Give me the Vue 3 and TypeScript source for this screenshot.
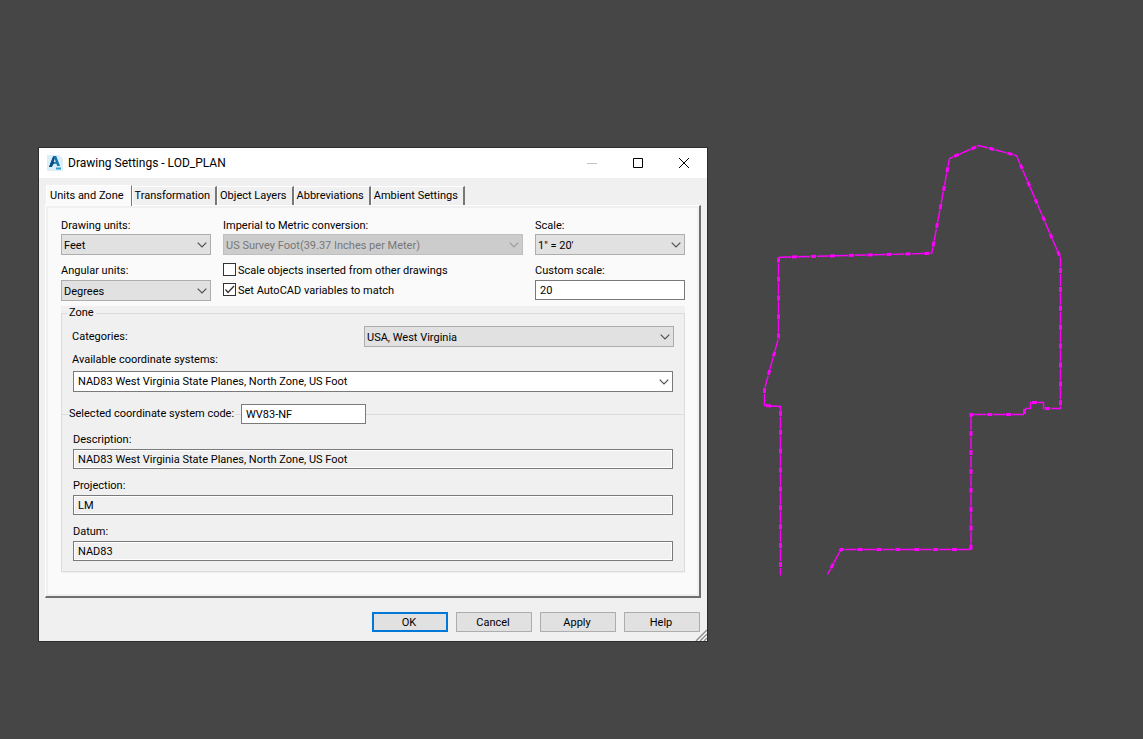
<script setup lang="ts">
import { ref } from 'vue'

interface Field {
  id: string
  label: string
  value: string
}

const tabs = ['Units and Zone', 'Transformation', 'Object Layers', 'Abbreviations', 'Ambient Settings']
const activeTab = ref(0)

const drawingUnits = ref('Feet')
const angularUnits = ref('Degrees')
const conversion = ref('US Survey Foot(39.37 Inches per Meter)')
const scale = ref('1" = 20\'')
const customScale = ref('20')
const scaleObjects = ref(false)
const matchVariables = ref(true)
const category = ref('USA, West Virginia')
const system = ref('NAD83 West Virginia State Planes, North Zone, US Foot')
const code = ref('WV83-NF')

const details: Field[] = [
  { id: 'description', label: 'Description:', value: 'NAD83 West Virginia State Planes, North Zone, US Foot' },
  { id: 'projection', label: 'Projection:', value: 'LM' },
  { id: 'datum', label: 'Datum:', value: 'NAD83' },
]

const actions = ['OK', 'Cancel', 'Apply', 'Help']

// Boundary runs; `lead` is the distance to the first heavy mark of the linetype.
const runs = [
  { d: 'M780.5 575.5V406.5L764.5 405.5V389L778.5 338V257.3L931.8 253.3', lead: 8.5 },
  { d: 'M931.8 253.3L949.5 158.5L979 145.5L1016.5 155.5L1060.5 258', lead: 7 },
  { d: 'M1060.5 258V408.5H1043.5V402.5H1030.5V408.5H1024.5V414.5H971V549.5H841L827.5 574.5', lead: 10 },
]
</script>

<template>
  <main class="workspace">
    <section class="dialog" role="dialog" aria-labelledby="dialog-title">
      <header class="titlebar">
        <svg class="logo" viewBox="0 0 16 16" aria-hidden="true">
          <path d="M0 0H12L16 4V16H0Z" fill="#dceef8" />
          <path d="M2 12L6.300 1H9.200L13 11H10.200L9.400 8.800H6L4.800 12Z" fill="#1674ae" />
          <path d="M6.300 1L8 6.500L4.800 12H2Z" fill="#0b4f80" />
          <path d="M6.700 7H8.800L7.700 3.800Z" fill="#dceef8" />
          <path d="M9 13.500H14" stroke="#2f9bd0" stroke-width="2" />
        </svg>
        <h1 id="dialog-title">Drawing Settings - LOD_PLAN</h1>
        <div class="window-buttons">
          <button type="button" aria-label="Minimize" disabled>
            <svg viewBox="0 0 12 12"><path d="M1 6.500H11" stroke="#c4c4c4" /></svg>
          </button>
          <button type="button" aria-label="Maximize">
            <svg viewBox="0 0 12 12"><path d="M1.500 1.500H10.500V10.500H1.500Z" fill="none" stroke="#000" /></svg>
          </button>
          <button type="button" aria-label="Close">
            <svg viewBox="0 0 12 12"><path d="M1 1L11 11M11 1L1 11" stroke="#000" /></svg>
          </button>
        </div>
      </header>

      <div class="body">
        <div class="tabs" role="tablist">
          <button
            v-for="(tab, i) in tabs"
            :key="tab"
            type="button"
            role="tab"
            class="tab"
            :class="{ active: i === activeTab }"
            :aria-selected="i === activeTab"
            @click="activeTab = i"
          >{{ tab }}</button>
        </div>

        <div class="panel" role="tabpanel">
          <div class="settings">
            <div class="column">
              <label for="drawing-units">Drawing units:</label>
              <div class="select">
                <select id="drawing-units" v-model="drawingUnits"><option>Feet</option></select>
                <svg class="chevron" viewBox="0 0 10 6"><path d="M0.700 0.700L5 5L9.300 0.700" /></svg>
              </div>
              <label for="angular-units" class="second">Angular units:</label>
              <div class="select">
                <select id="angular-units" v-model="angularUnits"><option>Degrees</option></select>
                <svg class="chevron" viewBox="0 0 10 6"><path d="M0.700 0.700L5 5L9.300 0.700" /></svg>
              </div>
            </div>
            <div class="column">
              <label for="conversion">Imperial to Metric conversion:</label>
              <div class="select">
                <select id="conversion" v-model="conversion" disabled>
                  <option>US Survey Foot(39.37 Inches per Meter)</option>
                </select>
                <svg class="chevron muted" viewBox="0 0 10 6"><path d="M0.700 0.700L5 5L9.300 0.700" /></svg>
              </div>
              <div class="checks">
                <label class="check">
                  <span class="box">
                    <input v-model="scaleObjects" type="checkbox" />
                    <svg v-if="scaleObjects" viewBox="0 0 13 13"><path d="M2.500 6.500L5 9.500L11 3" /></svg>
                  </span>
                  Scale objects inserted from other drawings
                </label>
                <label class="check">
                  <span class="box">
                    <input v-model="matchVariables" type="checkbox" />
                    <svg v-if="matchVariables" viewBox="0 0 13 13"><path d="M2.500 6.500L5 9.500L11 3" /></svg>
                  </span>
                  Set AutoCAD variables to match
                </label>
              </div>
            </div>
            <div class="column">
              <label for="scale">Scale:</label>
              <div class="select">
                <select id="scale" v-model="scale"><option>1" = 20'</option></select>
                <svg class="chevron" viewBox="0 0 10 6"><path d="M0.700 0.700L5 5L9.300 0.700" /></svg>
              </div>
              <label for="custom-scale" class="second">Custom scale:</label>
              <input id="custom-scale" v-model="customScale" class="text" type="text" />
            </div>
          </div>

          <div class="zone">
            <fieldset class="upper">
              <legend class="zone-title">Zone</legend>
              <div class="categories">
                <label for="category">Categories:</label>
                <div class="select">
                  <select id="category" v-model="category"><option>USA, West Virginia</option></select>
                  <svg class="chevron" viewBox="0 0 10 6"><path d="M0.700 0.700L5 5L9.300 0.700" /></svg>
                </div>
              </div>
              <div class="systems">
                <label for="system">Available coordinate systems:</label>
                <div class="select white">
                  <select id="system" v-model="system">
                    <option>NAD83 West Virginia State Planes, North Zone, US Foot</option>
                  </select>
                  <svg class="chevron" viewBox="0 0 10 6"><path d="M0.700 0.700L5 5L9.300 0.700" /></svg>
                </div>
              </div>
            </fieldset>
            <fieldset class="lower">
              <legend class="code">
                <label for="code">Selected coordinate system code:</label>
                <span class="rule"></span>
                <input id="code" v-model="code" class="text" type="text" />
              </legend>
              <div class="details">
                <div v-for="field in details" :key="field.id" class="detail">
                  <label :for="field.id">{{ field.label }}</label>
                  <input :id="field.id" class="text readonly" type="text" :value="field.value" readonly />
                </div>
              </div>
            </fieldset>
          </div>
        </div>

        <footer class="actions">
          <button v-for="(action, i) in actions" :key="action" type="button" :class="{ primary: i === 0 }">{{ action }}</button>
        </footer>
      </div>
      <svg class="grip" viewBox="0 0 12 12" aria-hidden="true">
        <path d="M12 0V12H0Z" fill="#fff" />
        <path d="M1 12L12 1M5 12L12 5M9 12L12 9" stroke="#8c8c8c" stroke-width="1.500" />
      </svg>
    </section>

    <svg class="boundary" viewBox="763 144 299 433" role="img" aria-label="Site boundary">
      <g v-for="run in runs" :key="run.d" fill="none" stroke="#ff00ff">
        <path :d="run.d" stroke-width="1.400" stroke-dasharray="12 1 5 0.900" :stroke-dashoffset="13 - run.lead" />
        <path :d="run.d" stroke-width="3" stroke-dasharray="5 13.900" :stroke-dashoffset="-run.lead" />
      </g>
    </svg>
  </main>
</template>

<style>
body {
  margin: 0;
  background: #464646;
}
</style>

<style scoped>
.workspace {
  box-sizing: border-box;
  min-height: 100vh;
  padding: 144px 81px 40px 39px;
  display: grid;
  grid-template-columns: minmax(0, 668fr) minmax(0, 299fr);
  gap: 56px;
  align-items: start;
  background: #464646;
  color: #000;
  font: 11px/14px Roboto, "Liberation Sans", sans-serif;
}

.workspace button,
.workspace input,
.workspace select {
  box-sizing: border-box;
  margin: 0;
  font: inherit;
  color: inherit;
  border-radius: 0;
  appearance: none;
}

.dialog {
  position: relative;
  margin-top: 4px;
  background: #f0f0f0;
  box-shadow: 0 0 0 1px #2d2d2d;
}

.titlebar {
  display: flex;
  align-items: center;
  height: 30px;
  padding-left: 8px;
  background: #fff;
}

.logo {
  width: 16px;
  height: 16px;
}

.titlebar h1 {
  flex: 1;
  margin: 0 0 0 5px;
  font-size: 12px;
  font-weight: 400;
  line-height: 16px;
}

.window-buttons {
  display: flex;
}

.window-buttons button {
  display: grid;
  place-items: center;
  width: 46px;
  height: 30px;
  padding: 0;
  border: 0;
  background: none;
}

.window-buttons svg {
  width: 12px;
  height: 12px;
}

.body {
  padding: 7px 6px 9px;
}

.tabs {
  display: flex;
  align-items: flex-end;
  height: 20px;
}

.tab {
  height: 19px;
  margin-right: 2px;
  padding: 0 5px 0 2px;
  border: solid;
  border-width: 1px 2px 0 1px;
  border-color: #fff #777 #fff #fff;
  background: #f0f0f0;
  white-space: nowrap;
}

.workspace .tab.active {
  position: relative;
  height: 21px;
  margin: 0 0 -1px 1px;
  padding: 0 7px 1px 3px;
  border-right-width: 1px;
  background: #fafafa;
}

.panel {
  padding: 12px 14px 23px 15px;
  border: solid;
  border-width: 1px 2px 2px 1px;
  border-color: #fff #6f6f6f #6f6f6f #fff;
  background: #fafafa;
  box-shadow: inset 0 0 0 2px #f0f0f0;
}

.settings {
  display: grid;
  grid-template-columns: 150fr 300fr 150fr;
  gap: 12px;
}

.settings > .column {
  min-width: 0;
}

.column > label {
  display: block;
  height: 16px;
  line-height: 16px;
}

.column > .second {
  margin-top: 8px;
  height: 17px;
}

.select {
  position: relative;
}

.select select {
  display: block;
  width: 100%;
  height: 21px;
  padding: 2px 20px 0 2px;
  border: 1px solid #adadad;
  background: #e1e1e1;
}

.workspace .select select:disabled {
  border-color: #bfbfbf;
  background: #ccc;
  color: #777;
  opacity: 1;
}

.workspace .white select {
  padding-top: 0;
  padding-left: 4px;
  border-color: #7a7a7a;
  background: #fff;
}

.chevron {
  position: absolute;
  top: 8px;
  right: 4px;
  width: 10px;
  height: 6px;
  fill: none;
  stroke: #505050;
  stroke-width: 1.2;
  pointer-events: none;
}

.chevron.muted {
  stroke: #9c9c9c;
}

.checks {
  display: grid;
  gap: 6px;
  margin-top: 8px;
}

.check {
  display: flex;
  align-items: flex-start;
  gap: 2px;
  height: 14px;
  line-height: 16px;
  white-space: nowrap;
}

.box {
  position: relative;
  width: 13px;
  height: 13px;
}

.workspace .box input {
  display: block;
  width: 13px;
  height: 13px;
  border: 1px solid #333;
  background: #fff;
}

.box svg {
  position: absolute;
  inset: 0;
  fill: none;
  stroke: #333;
  stroke-width: 1.3;
  pointer-events: none;
}

.text {
  display: block;
  width: 100%;
  height: 20px;
  padding: 0 4px;
  border: 1px solid #7a7a7a;
  background: #fff;
}

.zone {
  margin-top: 5px;
  padding-bottom: 1px;
  background: #f0f0f0;
}

.zone fieldset {
  min-width: 0;
  margin: 0;
  border: 1px solid #dcdcdc;
}

.zone .upper {
  padding: 6px 10px 22px;
  border-bottom: 0;
}

.zone .lower {
  margin-top: -10px;
  padding: 9px 11px 10px;
}

.zone-title {
  margin-left: -5px;
  padding: 0 2px;
}

.categories {
  display: grid;
  grid-template-columns: 292fr 310fr;
  align-items: center;
}

.systems {
  margin-right: 1px;
}

.systems label {
  display: block;
  padding: 6px 0 4px;
}

.systems .select {
  margin-left: 1px;
}

.code {
  display: flex;
  align-items: center;
  margin-left: -5px;
  padding: 0 0 0 1px;
}

.code label {
  width: 166px;
  white-space: nowrap;
}

.code .rule {
  width: 6px;
  height: 1px;
  background: #dcdcdc;
}

.code .text {
  width: 125px;
}

.details {
  display: grid;
  gap: 10px;
}

.detail label {
  display: block;
  height: 16px;
}

.workspace .readonly {
  background: #f0f0f0;
  box-shadow: inset 0 0 0 1px #fff;
}

.actions {
  display: flex;
  justify-content: flex-end;
  gap: 8px;
  margin-top: 14px;
  padding-right: 1px;
}

.actions button {
  width: 76px;
  height: 20px;
  padding: 2px 2px 0 0;
  border: 1px solid #adadad;
  background: #e1e1e1;
}

.workspace .actions .primary {
  border: 2px solid #0078d7;
}

.grip {
  position: absolute;
  right: 0;
  bottom: 0;
  width: 12px;
  height: 12px;
}

.boundary {
  display: block;
  width: 100%;
}
</style>
